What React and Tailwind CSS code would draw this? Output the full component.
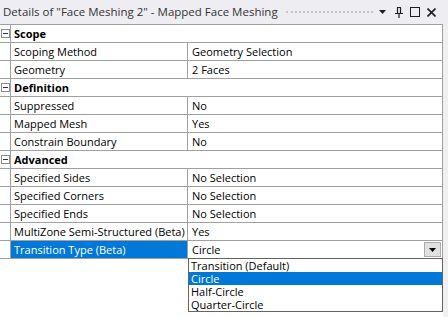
import React from 'react';

// Details panel — property grid with an open combo box on the last row

const rows = [
    { cat: 'Scope' },
    { name: 'Scoping Method', value: 'Geometry Selection' },
    { name: 'Geometry', value: '2 Faces' },
    { cat: 'Definition' },
    { name: 'Suppressed', value: 'No' },
    { name: 'Mapped Mesh', value: 'Yes' },
    { name: 'Constrain Boundary', value: 'No' },
    { cat: 'Advanced' },
    { name: 'Specified Sides', value: 'No Selection' },
    { name: 'Specified Corners', value: 'No Selection' },
    { name: 'Specified Ends', value: 'No Selection' },
    { name: 'MultiZone Semi-Structured (Beta)', value: 'Yes' },
    { name: 'Transition Type (Beta)', value: 'Circle', selected: true },
];

const options = ['Transition (Default)', 'Circle', 'Half-Circle', 'Quarter-Circle'];

const MinusBox = () => (
    <div className="w-[9px] h-[9px] border border-[#8c8c8c] bg-white flex items-center justify-center">
        <div className="w-[5px] h-[1px] bg-[#333]" />
    </div>
);

const TitleIcons = () => (
    <div className="flex items-center gap-[6px] text-[#1e1e1e]">
        <svg width="7" height="4" viewBox="0 0 7 4"><path d="M0 0h7L3.5 4z" fill="#1e1e1e" /></svg>
        <svg width="8" height="11" viewBox="0 0 8 11" className="ml-[3px]">
            <path d="M2 0.5h4M2.5 0.5v6M5.5 0.5v6M0 6.5h8M4 6.5v4.5" stroke="#1e1e1e" strokeWidth="1.2" fill="none" />
        </svg>
        <svg width="10" height="10" viewBox="0 0 10 10" className="ml-[1px]">
            <rect x="0.5" y="0.5" width="9" height="9" stroke="#1e1e1e" fill="none" />
        </svg>
        <svg width="9" height="9" viewBox="0 0 9 9" className="ml-[1px]">
            <path d="M0.5 0.5l8 8M8.5 0.5l-8 8" stroke="#1e1e1e" strokeWidth="1.6" />
        </svg>
    </div>
);

export default function App() {
    return (
        <div className="relative w-[448px] h-[317px] bg-white overflow-hidden text-[11px] text-black" style={{ fontFamily: '"Open Sans", "Noto Sans", sans-serif' }}>
            {/* title bar */}
            <div className="h-[24px] bg-[#eeeef2] flex items-center pl-[3px] pr-[12px]">
                <span className="text-[11.5px] text-[#333] whitespace-nowrap">Details of "Face Meshing 2" - Mapped Face Meshing</span>
                <div className="flex-1 ml-[8px] mr-[6px] h-[3px] border-t-2 border-dotted border-[#c4c4c8]" />
                <TitleIcons />
            </div>

            <div className="flex">
                {/* property grid */}
                <div className="w-[443px]">
                    <div className="border-t border-r border-[#a0a0a0]">
                        {rows.map((r, i) =>
                            r.cat ? (
                                <div key={i} className="h-[18px] flex border-b border-[#a0a0a0]">
                                    <div className="w-[11px] border-r border-[#a0a0a0] flex items-center pl-[1px]">
                                        <MinusBox />
                                    </div>
                                    <div className="pl-[3px] font-bold leading-[17px]">{r.cat}</div>
                                </div>
                            ) : (
                                <div key={i} className="h-[18px] flex border-b border-[#a0a0a0]">
                                    <div className="w-[11px] border-r border-[#a0a0a0]" />
                                    <div className={`w-[177px] pl-[3px] leading-[17px] whitespace-nowrap border-r border-[#a0a0a0] ${r.selected ? 'bg-[#0078d7] text-white' : ''}`}>
                                        {r.name}
                                    </div>
                                    <div className="flex-1 pl-[4px] leading-[17px] flex items-center justify-between pr-[1px]">
                                        <span>{r.value}</span>
                                        {r.selected && (
                                            <div className="w-[17px] h-[15px] bg-[#e1e1e1] border border-[#adadad] flex items-center justify-center">
                                                <svg width="7" height="4" viewBox="0 0 7 4"><path d="M0 0h7L3.5 4z" fill="#000" /></svg>
                                            </div>
                                        )}
                                    </div>
                                </div>
                            )
                        )}
                    </div>
                </div>
                <div className="flex-1 bg-[#f0f0f0] h-[293px]" />
            </div>

            {/* open combo list */}
            <div className="absolute left-[188px] top-[258px] w-[255px] border border-[#646464] bg-white">
                {options.map((o) => (
                    <div key={o} className={`h-[13px] leading-[13px] pl-[2px] ${o === 'Circle' ? 'bg-[#0078d7] text-white' : ''}`}>{o}</div>
                ))}
            </div>
        </div>
    );
}
